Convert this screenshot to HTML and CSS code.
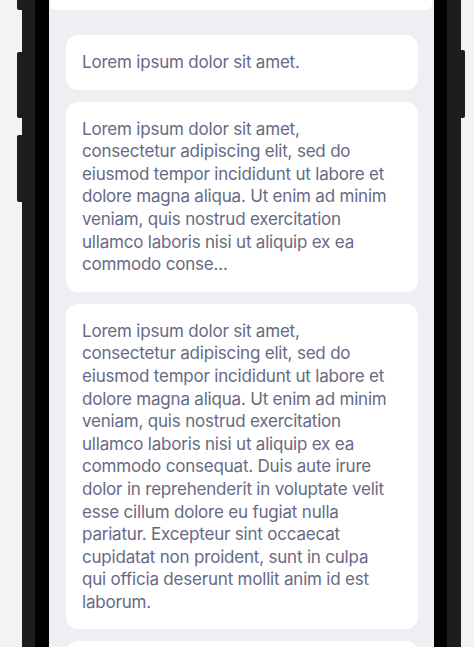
FILE: index.html
```html
<!DOCTYPE html>
<html lang="en">
<head>
<meta charset="utf-8">
<title>List</title>
<link rel="stylesheet" href="styles.css">
</head>
<body>
<div class="phone">
  <span class="btn btn-l1"></span>
  <span class="btn btn-l2"></span>
  <span class="btn btn-l3"></span>
  <span class="btn btn-r1"></span>
  <div class="bezel">
    <div class="screen">
      <div class="header-strip"></div>
      <div class="list">
        <div class="card">Lorem ipsum dolor sit amet.</div>
        <div class="card">Lorem ipsum dolor sit amet, consectetur adipiscing elit, sed do eiusmod tempor incididunt ut labore et dolore magna aliqua. Ut enim ad minim veniam, quis nostrud exercitation ullamco laboris nisi ut aliquip ex ea commodo conse...</div>
        <div class="card">Lorem ipsum dolor sit amet, consectetur adipiscing elit, sed do eiusmod tempor incididunt ut labore et dolore magna aliqua. Ut enim ad minim veniam, quis nostrud exercitation ullamco laboris nisi ut aliquip ex ea commodo consequat. Duis aute irure dolor in reprehenderit in voluptate velit esse cillum dolore eu fugiat nulla pariatur. Excepteur sint occaecat cupidatat non proident, sunt in culpa qui officia deserunt mollit anim id est laborum.</div>
        <div class="card card-empty"></div>
      </div>
    </div>
  </div>
</div>
</body>
</html>
```
FILE: styles.css
```css
html, body {
  margin: 0;
  padding: 0;
  background: #f3f3f4;
  overflow: hidden;
}
body {
  width: 474px;
  height: 647px;
  font-family: Inter, "Noto Sans", "Liberation Sans", sans-serif;
}
.phone {
  position: relative;
  margin-left: 22px;
  width: 439px;
  height: 647px;
  box-sizing: border-box;
  background: #1d1d1d;
  padding: 0 14px 0 13px;
  display: flex;
}
.btn {
  position: absolute;
  background: #1d1d1d;
  width: 5px;
}
.btn-l1 { left: -5px; top: -20px; height: 30px; border-radius: 2px 0 0 2px; }
.btn-l2 { left: -5px; top: 52px; height: 66px; border-radius: 2px 0 0 2px; }
.btn-l3 { left: -5px; top: 135px; height: 67px; border-radius: 2px 0 0 2px; }
.btn-r1 { right: -4px; width: 4px; top: 50px; height: 68px; border-radius: 0 2px 2px 0; }
.bezel {
  flex: 1;
  background: #000;
  padding: 0 13px 0 14px;
  display: flex;
}
.screen {
  flex: 1;
  background: #eeeff3;
  display: flex;
  flex-direction: column;
  overflow: hidden;
}
.header-strip {
  height: 10px;
  margin: 0 2px 0 1px;
  background: #ffffff;
  border-radius: 0 0 6px 6px;
  flex-shrink: 0;
}
.list {
  padding: 25px 16px 0 17px;
  display: flex;
  flex-direction: column;
  gap: 12px;
}
.card {
  background: #ffffff;
  border-radius: 12px;
  padding: 16px 29px 16px 16px;
  font-size: 17px;
  line-height: 22.6px;
  letter-spacing: -0.2px;
  color: #676a84;
  flex-shrink: 0;
}
.card-empty {
  height: 22.6px;
}
```
